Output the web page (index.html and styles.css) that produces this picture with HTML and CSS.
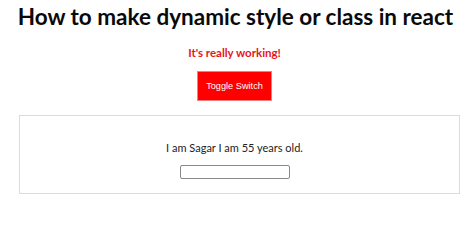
FILE: index.html
```html
<!DOCTYPE html>
<html>
<head>
<meta charset="utf-8">
<link rel="stylesheet" href="styles.css">
</head>
<body>
<div class="app">
  <h1 class="title">How to make dynamic style or class in react</h1>
  <p class="status">It's really working!</p>
  <button class="toggle">Toggle Switch</button>
  <div class="card">
    <p class="info">I am Sagar I am 55 years old.</p>
    <input class="field" type="text">
  </div>
</div>
</body>
</html>
```
FILE: styles.css
```css
html, body {
  margin: 0;
  padding: 0;
  background: #ffffff;
}
.app {
  display: flex;
  flex-direction: column;
  align-items: center;
  font-family: Lato, "Noto Sans", sans-serif;
  color: #000;
}
.title {
  margin: 3px 0 0 -3px;
  font-size: 22.5px;
  line-height: 28px;
  font-weight: 700;
  color: #0a0a0a;
  white-space: nowrap;
}
.status {
  margin: 14px 0 0 -5px;
  font-size: 11.5px;
  line-height: 16px;
  font-weight: 700;
  color: #e8141b;
}
.toggle {
  margin: 10px 0 0 -5px;
  width: 75px;
  height: 30px;
  background: #ff0000;
  border: 1px solid #f08080;
  color: #ffffff;
  font-family: "Liberation Sans", Arial, sans-serif;
  font-size: 9.2px;
  padding: 0;
}
.card {
  box-sizing: border-box;
  margin: 14px 0 0 4px;
  width: 441px;
  height: 79px;
  border: 1px solid #dcdcdc;
  display: flex;
  flex-direction: column;
  align-items: center;
  padding: 25px 9px 0 0;
}
.info {
  margin: 0;
  font-size: 11px;
  line-height: 14px;
  color: #222;
  white-space: nowrap;
}
.field {
  margin-top: 10px;
  box-sizing: border-box;
  width: 110px;
  height: 14px;
  border: 1px solid #8a8a8a;
  border-radius: 2px;
  padding: 0;
}
```
